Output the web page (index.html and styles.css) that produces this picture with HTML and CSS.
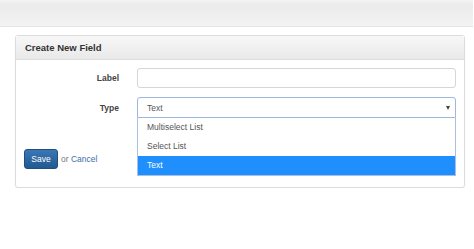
FILE: index.html
```html
<!DOCTYPE html>
<html lang="en">
<head>
    <meta charset="UTF-8">
    <meta name="viewport" content="width=device-width, initial-scale=1.0">
    <title>Create New Field</title>
    <link rel="stylesheet" href="styles.css">
</head>
<body>

<div class="topbar"></div>

<div class="panel">
    <div class="panel-heading">Create New Field</div>
    <div class="panel-body">
        <div class="form-row">
            <label class="form-label">Label</label>
            <input type="text" class="form-input">
        </div>
        <div class="form-row">
            <label class="form-label">Type</label>
            <div class="select-wrap">
                <div class="select-box">
                    <span>Text</span>
                    <span class="caret"></span>
                </div>
                <ul class="select-menu">
                    <li>Multiselect List</li>
                    <li>Select List</li>
                    <li class="selected">Text</li>
                </ul>
            </div>
        </div>
        <div class="actions">
            <button class="btn-save">Save</button>
            <span class="or">or <a href="#">Cancel</a></span>
        </div>
    </div>
</div>

</body>
</html>
```

FILE: styles.css
```css
body {
    margin: 0;
    font-family: "Liberation Sans", Arial, sans-serif;
    background-color: #fff;
    color: #333;
}
.topbar {
    height: 26px;
    margin-right: 1px;
    background: linear-gradient(to bottom, #f4f4f4 0%, #ebebeb 20%, #f3f3f3 100%);
    border-bottom: 1px solid #e4e4e4;
}
.panel {
    margin: 8px 9px 0 15px;
    border: 1px solid #dcdcdc;
    border-radius: 3px;
    box-shadow: 0 1px 2px rgba(0, 0, 0, 0.06);
}
.panel-heading {
    height: 23px;
    line-height: 23px;
    padding-left: 9px;
    font-size: 9.5px;
    font-weight: bold;
    color: #333;
    background: linear-gradient(to bottom, #f7f7f7, #e9e9e9);
    border-bottom: 1px solid #dcdcdc;
}
.panel-body {
    padding: 8px 8px 18px 8px;
}
.form-row {
    display: flex;
    align-items: center;
    margin-bottom: 9px;
}
.form-label {
    width: 95px;
    text-align: right;
    font-size: 8.5px;
    font-weight: bold;
    color: #444;
    margin-right: 18px;
}
.form-input {
    width: 319px;
    height: 20px;
    box-sizing: border-box;
    border: 1px solid #d6d6d6;
    border-radius: 3px;
    margin: 0;
}
.select-wrap {
    position: relative;
    width: 319px;
}
.select-box {
    height: 21px;
    box-sizing: border-box;
    border: 1px solid #9fb7de;
    border-radius: 3px 3px 0 0;
    display: flex;
    align-items: center;
    justify-content: space-between;
    padding: 0 5px 0 9px;
    font-size: 8.5px;
    color: #555;
}
.caret {
    width: 0;
    height: 0;
    border-left: 2px solid transparent;
    border-right: 2px solid transparent;
    border-top: 4px solid #444;
}
.select-menu {
    position: absolute;
    top: 21px;
    left: 0;
    right: 0;
    margin: 0;
    padding: 0;
    list-style: none;
    background: #fff;
    border: 1px solid #a8bfe4;
    border-top: none;
}
.select-menu li {
    height: 19px;
    line-height: 19px;
    padding-left: 9px;
    font-size: 8.5px;
    color: #555;
}
.select-menu li.selected {
    background-color: #1e8ffc;
    color: #fff;
}
.actions {
    display: flex;
    align-items: center;
    margin-top: 31px;
}
.btn-save {
    width: 34px;
    height: 20px;
    padding: 0;
    font-family: inherit;
    font-size: 8.5px;
    color: #fff;
    background: linear-gradient(to bottom, #3a77b5, #22598f);
    border: 1px solid #204e80;
    border-radius: 3px;
}
.or {
    margin-left: 3px;
    font-size: 8.5px;
    color: #777;
}
.or a {
    color: #3c6fad;
    text-decoration: none;
}
```
